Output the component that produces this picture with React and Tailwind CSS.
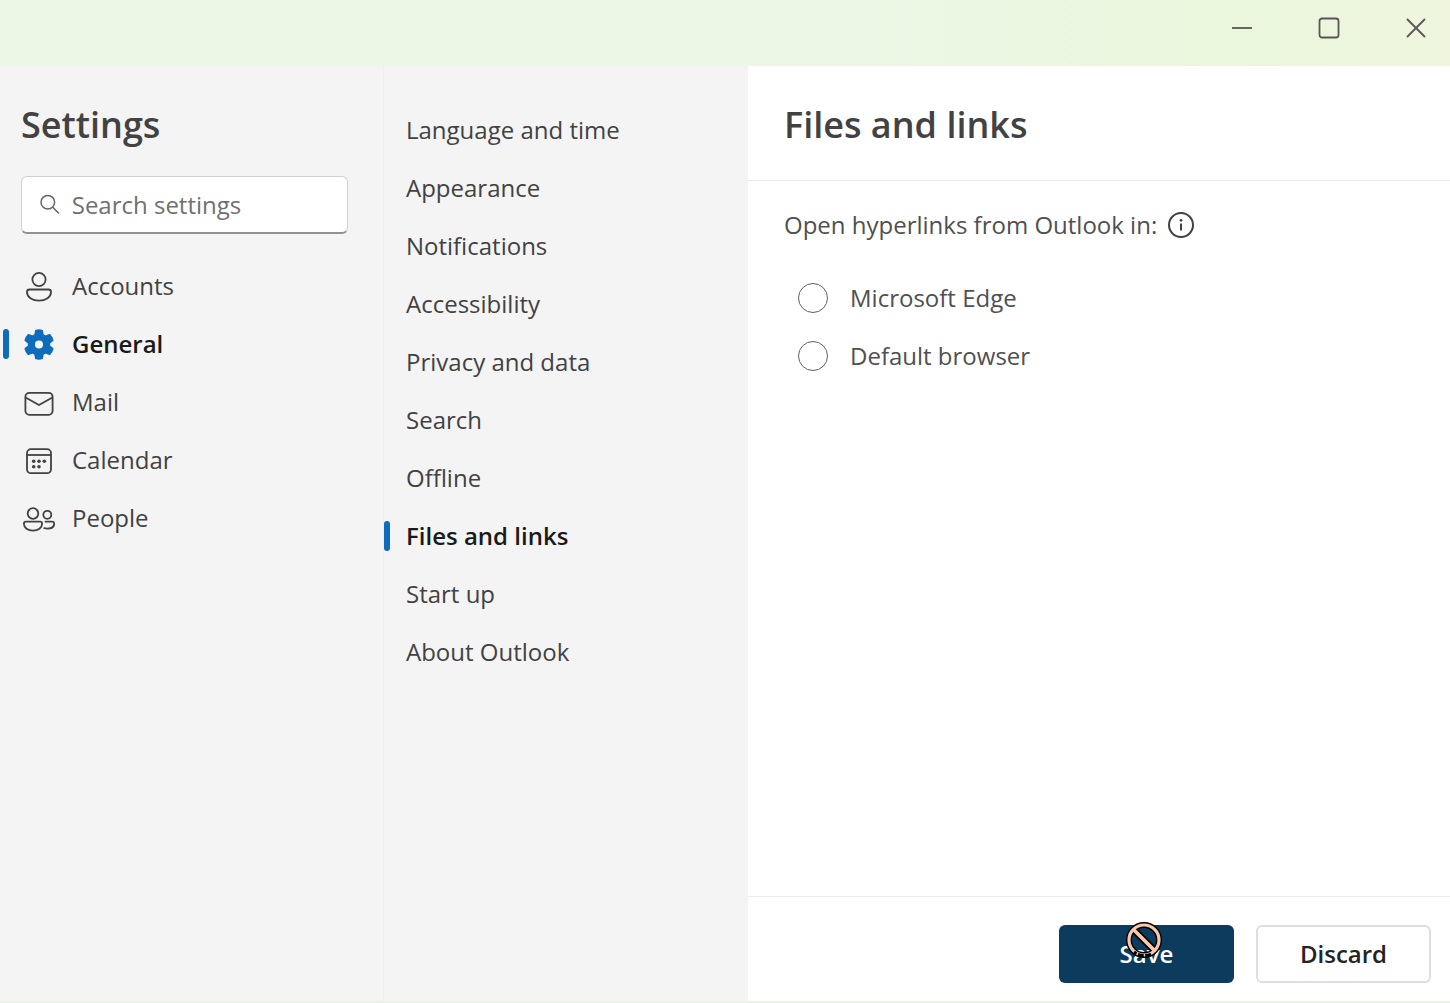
import React from "react";

const icons = {
  accounts: (
    <g fill="none" stroke="currentColor" strokeWidth="1.8">
      <circle cx="16" cy="9.5" r="6.6" />
      <path d="M6.5 19.5h19c1.4 0 2.5 1.1 2.5 2.4 0 5.2-5.2 8.8-12 8.8S4 27.1 4 21.9c0-1.3 1.1-2.4 2.5-2.4z" />
    </g>
  ),
  general: (
    <g transform="translate(16 16.5)">
      <path
        d="M-3-13.800 0-14.300 3-13.800 3.700-9.600 6.500-8 10.500-9.500 12.400-7.200 13.500-4.300 10.200-1.600V1.600L13.500 4.300 12.400 7.200 10.500 9.500 6.500 8 3.700 9.600 3 13.800 0 14.300-3 13.800-3.700 9.600-6.500 8-10.500 9.500-12.400 7.200-13.500 4.300-10.200 1.600V-1.600L-13.500-4.300-12.400-7.200-10.500-9.500-6.500-8-3.700-9.600z"
        fill="#0f6cbd"
        stroke="#0f6cbd"
        strokeWidth="2"
        strokeLinejoin="round"
      />
      <circle r="4" fill="#f4f4f4" />
    </g>
  ),
  mail: (
    <g fill="none" stroke="currentColor" strokeWidth="1.8" strokeLinejoin="round">
      <rect x="2.4" y="6.8" width="27.2" height="22" rx="4" />
      <path d="M2.6 11.5 16 19l13.400-7.500" />
    </g>
  ),
  calendar: (
    <g fill="none" stroke="currentColor" strokeWidth="1.8">
      <rect x="4" y="5.2" width="24" height="24" rx="4" />
      <path d="M4 11h24" />
      <g fill="currentColor" stroke="none">
        <circle cx="10.7" cy="17.2" r="1.8" />
        <circle cx="16" cy="17.2" r="1.8" />
        <circle cx="21.3" cy="17.2" r="1.8" />
        <circle cx="10.7" cy="22.8" r="1.8" />
        <circle cx="16" cy="22.8" r="1.8" />
      </g>
    </g>
  ),
  people: (
    <g fill="none" stroke="currentColor" strokeWidth="1.8" strokeLinecap="round">
      <circle cx="10" cy="11.5" r="5.3" />
      <path d="M3 19.700h14c1.200 0 2.100.9 2.100 2 0 4.300-4 7-9.100 7s-9.100-2.700-9.100-7c0-1.100.9-2 2.100-2z" />
      <circle cx="24.3" cy="12.8" r="4" />
      <path d="M22.5 19.700h6.700c1.100 0 2 .8 2 1.900 0 3.200-2.900 5-6.700 5-1.200 0-2.200-.1-3.200-.4" />
    </g>
  ),
};

const sections = [
  { id: "accounts", label: "Accounts" },
  { id: "general", label: "General" },
  { id: "mail", label: "Mail" },
  { id: "calendar", label: "Calendar" },
  { id: "people", label: "People" },
];

const pages = [
  "Language and time",
  "Appearance",
  "Notifications",
  "Accessibility",
  "Privacy and data",
  "Search",
  "Offline",
  "Files and links",
  "Start up",
  "About Outlook",
];

const Marker = ({ active }) => (
  <span className={active ? "h-[30px] w-[6px] rounded-full bg-[#0f6cbd]" : "w-[6px]"} />
);

const TitleBar = () => (
  <header className="flex h-[66px] justify-end bg-linear-to-r from-[#eaf8e5] from-60% via-[#eaf7dd] via-85% to-[#eef5dc] text-[#5c5456]">
    <button aria-label="Minimize" className="flex h-14 w-[87px] items-center justify-center">
      <svg width="22" height="22" fill="none" stroke="currentColor" strokeWidth="1.8">
        <path d="M1 11h20" />
      </svg>
    </button>
    <button aria-label="Maximize" className="flex h-14 w-[87px] items-center justify-center">
      <svg width="22" height="22" fill="none" stroke="currentColor" strokeWidth="1.8">
        <rect x="1.5" y="1.5" width="19" height="19" rx="2.5" />
      </svg>
    </button>
    <button aria-label="Close" className="flex h-14 w-[78px] items-center justify-center pl-[10px]">
      <svg width="22" height="22" fill="none" stroke="currentColor" strokeWidth="1.8">
        <path d="m2 2 18 18M20 2 2 20" />
      </svg>
    </button>
  </header>
);

const SectionNav = () => (
  <aside className="w-[384px] shrink-0 border-r border-[#efefef] pt-[35px]">
    <h1 className="pl-[21px] text-[36px] leading-[48px] font-semibold">Settings</h1>
    <label className="mt-[27px] ml-[21px] flex h-[58px] w-[327px] items-center gap-3 rounded-md border border-b-2 border-[#d1d1d1] border-b-[#929292] bg-white pl-[18px]">
      <svg width="22" height="22" fill="none" stroke="#666" strokeWidth="1.5" strokeLinecap="round">
        <circle cx="7.8" cy="8.2" r="6.8" />
        <path d="m13 13.500 5.500 5.500" />
      </svg>
      <input
        type="text"
        aria-label="Search settings"
        placeholder="Search settings"
        className="w-full bg-transparent text-[24px] outline-none placeholder:text-[#707070]"
      />
    </label>
    <nav className="mt-[23px]">
      {sections.map(({ id, label }) => (
        <a
          key={id}
          href={`#${id}`}
          className={
            id === "general"
              ? "flex h-[58px] items-center pl-[3px] font-semibold text-[#1a1a1a]"
              : "flex h-[58px] items-center pl-[3px]"
          }
        >
          <Marker active={id === "general"} />
          <svg width="32" height="32" className="mr-[17px] ml-[14px]">
            {icons[id]}
          </svg>
          {label}
        </a>
      ))}
    </nav>
  </aside>
);

const PageNav = () => (
  <nav className="w-[364px] shrink-0 pt-[35px]">
    {pages.map((page) => (
      <a
        key={page}
        href="#general"
        className={
          page === "Files and links"
            ? "flex h-[58px] items-center gap-4 font-semibold text-[#1a1a1a]"
            : "flex h-[58px] items-center gap-4"
        }
      >
        <Marker active={page === "Files and links"} />
        {page}
      </a>
    ))}
  </nav>
);

const BrowserOption = ({ label }) => (
  <label className="flex h-[58px] items-center gap-[22px]">
    <input
      type="radio"
      name="browser"
      className="size-[30px] appearance-none rounded-full border border-[#616161] checked:border-8 checked:border-[#0f6cbd]"
    />
    {label}
  </label>
);

const BlockedCursor = () => (
  <svg width="38" height="38" className="absolute -top-1 left-[66px]" fill="none">
    <circle cx="19" cy="19" r="15" stroke="#000" strokeWidth="6" />
    <path d="m9 9 20 20" stroke="#000" strokeWidth="7" />
    <circle cx="19" cy="19" r="15" stroke="#f6c9ac" strokeWidth="3.2" />
    <path d="m8.500 8.500 21 21" stroke="#f6c9ac" strokeWidth="3.8" />
    <path d="M26 33a15.500 15.500 0 0 1-17-2" stroke="#000" strokeWidth="3" strokeDasharray="6 1.5" />
  </svg>
);

const FilesAndLinks = () => (
  <main className="flex flex-1 flex-col bg-white">
    <h2 className="border-b border-[#ebebeb] pt-[35px] pb-[31px] pl-9 text-[36px] leading-[48px] font-semibold">
      Files and links
    </h2>
    <div className="flex-1 pt-7 pl-9 text-[#505050]">
      <div className="mb-7 flex items-center gap-[10px]">
        <p id="browser-label">Open hyperlinks from Outlook in:</p>
        <button type="button" aria-label="More information">
          <svg width="28" height="28" fill="none" stroke="#424242" strokeWidth="2" className="block">
            <circle cx="14" cy="14" r="12" />
            <path d="M14 12.500v7" />
            <circle cx="14" cy="9.3" r="1.4" fill="#424242" stroke="none" />
          </svg>
        </button>
      </div>
      <div role="radiogroup" aria-labelledby="browser-label" className="pl-[14px]">
        <BrowserOption label="Microsoft Edge" />
        <BrowserOption label="Default browser" />
      </div>
    </div>
    <footer className="flex justify-end gap-[22px] border-t border-[#ebebeb] pt-7 pr-[19px] pb-[18px] font-semibold">
      <button className="relative h-[58px] w-[175px] rounded-md bg-[#0c3b5e] text-white">
        Save
        <BlockedCursor />
      </button>
      <button className="h-[58px] w-[175px] rounded-md border-2 border-[#dedede] bg-white text-[#242424]">
        Discard
      </button>
    </footer>
  </main>
);

const App = () => {
  return (
    <div className="flex min-h-screen flex-col border-b-2 border-[#e0fbd9] font-['Open_Sans','Noto_Sans',sans-serif] text-[24px] leading-8 text-[#424242]">
      <TitleBar />
      <div className="flex flex-1 bg-[#f4f4f4]">
        <SectionNav />
        <PageNav />
        <FilesAndLinks />
      </div>
    </div>
  );
};

export default App;
